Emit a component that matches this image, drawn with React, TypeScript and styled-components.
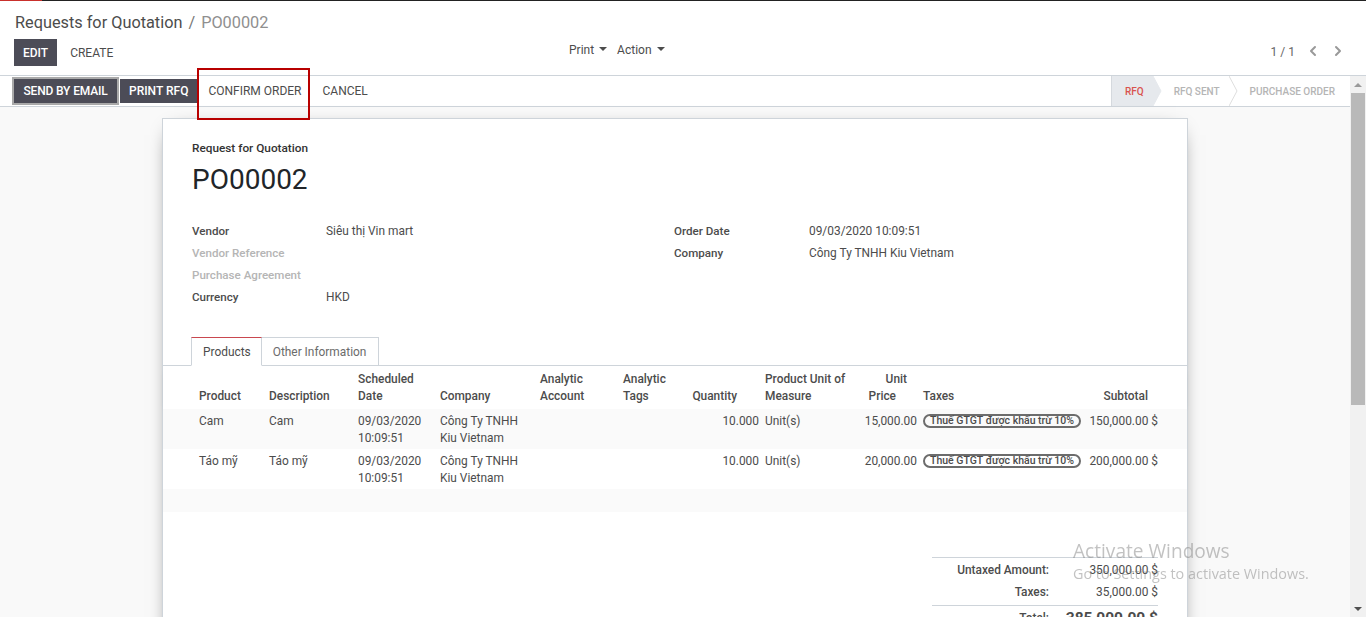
import styled, { createGlobalStyle } from 'styled-components';
import { ChevronLeft, ChevronRight } from 'lucide-react';

const GlobalStyle = createGlobalStyle`
  html, body {
    margin: 0;
    padding: 0;
    height: 100%;
    overflow: hidden;
    background: #fff;
  }
  body {
    font-family: Roboto, "Noto Sans", sans-serif;
    font-size: 11.9px;
    line-height: 17px;
    color: #4c4c4c;
  }
`;

const Page = styled.div`
  display: flex;
  flex-direction: column;
  height: 617px;
  overflow: hidden;
`;

const TopStrip = styled.div`
  flex: none;
  height: 1px;
  padding-bottom: 1px;
  background: linear-gradient(#222, #222) no-repeat 42px 0 / 100% 1px,
    linear-gradient(#c9302c, #c9302c) no-repeat 0 0 / 42px 1px;
`;

const ControlPanel = styled.div`
  flex: none;
  height: 74px;
  box-sizing: border-box;
  padding: 11px 20px 0 15px;
  border-bottom: 1px solid #ced4da;
`;

const Breadcrumb = styled.div`
  font-size: 16.3px;
  line-height: 20px;
  color: #4c4c4c;
`;

const Crumb = styled.span`
  color: #8f8f8f;
  margin-left: 6px;
`;

const Slash = styled.span`
  color: #777;
  margin-left: 6px;
`;

const PanelRow = styled.div`
  display: grid;
  grid-template-columns: 555px auto 1fr;
  align-items: center;
  margin: 6px 0 0 -1px;
  height: 27px;
`;

const ButtonGroup = styled.div`
  display: flex;
`;

const ActionButton = styled.button<{ $primary?: boolean }>`
  border: 0;
  margin: 0;
  height: 27px;
  padding: 0 9px;
  font: ${(p) => (p.$primary ? 500 : 400)} 12px Roboto, sans-serif;
  color: ${(p) => (p.$primary ? '#fff' : '#4c4c4c')};
  background: ${(p) => (p.$primary ? '#4c4c57' : 'transparent')};
  text-transform: uppercase;
`;

const CreateButton = styled(ActionButton)`
  margin-left: 4px;
`;

const Menus = styled.div`
  display: flex;
  gap: 10px;
  margin-top: -5px;
`;

const Menu = styled.span`
  display: flex;
  align-items: center;
  gap: 5px;
  font-size: 12px;
  &::after {
    content: '';
    border-top: 4px solid #4c4c4c;
    border-left: 4px solid transparent;
    border-right: 4px solid transparent;
    margin-bottom: 2px;
  }
`;

const Pager = styled.div`
  display: flex;
  justify-content: flex-end;
  align-items: center;
  gap: 8px;
  color: #666;
  font-size: 12px;
  svg {
    color: #999;
  }
`;

const PagerArrows = styled.span`
  display: flex;
  gap: 9px;
  margin-left: 2px;
  margin-top: -3px;
`;

const Body = styled.div`
  flex: 1;
  display: flex;
  min-height: 0;
`;

const Content = styled.div`
  flex: 1;
  min-width: 0;
  display: flex;
  flex-direction: column;
  background: #f9f9f9;
`;

const StatusBar = styled.div`
  flex: none;
  display: flex;
  justify-content: space-between;
  height: 30px;
  padding-left: 12px;
  background: #fff;
  border-bottom: 1px solid #ced4da;
`;

const FormButtons = styled.div`
  display: flex;
  align-items: center;
  position: relative;
`;

const FocusedButton = styled(ActionButton)`
  height: 24px;
  padding: 0 9px;
  margin-right: 2px;
  box-shadow: 0 0 0 2px #a9a9a9;
  margin-left: 2px;
  margin-top: -1px;
  width: 103px;
  white-space: nowrap;
  letter-spacing: -0.15px;
`;

const PrintButton = styled(ActionButton)`
  height: 24px;
  margin-left: 1px;
  margin-top: -1px;
  padding: 0 9px;
  white-space: nowrap;
`;

const PlainButton = styled(ActionButton)`
  height: 24px;
  margin-top: -1px;
  padding: 0 10px 0 11px;
  white-space: nowrap;
`;

const Highlight = styled.div`
  position: absolute;
  left: 185px;
  top: -8px;
  width: 113px;
  height: 52px;
  box-sizing: border-box;
  border: 2px solid #b80000;
  pointer-events: none;
`;

const Steps = styled.div`
  display: flex;
  align-items: stretch;
`;

const Step = styled.span<{ $active?: boolean }>`
  display: flex;
  align-items: center;
  padding: ${(p) => (p.$active ? '0 9px 0 13px' : '0 9px 0 12px')};
  font-size: 10px;
  font-weight: 500;
  text-transform: uppercase;
  color: ${(p) => (p.$active ? '#d9534f' : '#b5b5b5')};
  background: ${(p) => (p.$active ? '#e6e9ed' : 'transparent')};
  border-left: ${(p) => (p.$active ? '1px solid #d5d9de' : '0')};
`;

const LastStep = styled(Step)`
  padding-right: 15px;
`;

const Sheet = styled.div`
  flex: none;
  width: 1026px;
  box-sizing: border-box;
  height: 600px;
  margin: 11px 0 0 162px;
  padding-top: 21px;
  background: #fff;
  border: 1px solid #ced4da;
  box-shadow: 0 5px 20px -12px #000;
`;

const SheetHead = styled.div`
  padding-left: 29px;
`;

const DocType = styled.div`
  font-size: 11.8px;
  font-weight: 500;
  color: #333;
`;

const DocName = styled.h1`
  margin: 6px 0 0;
  font-size: 28px;
  line-height: 34px;
  font-weight: 400;
  color: #212529;
`;

const FieldColumns = styled.div`
  display: grid;
  grid-template-columns: 482px 1fr;
  padding: 24px 0 0 29px;
  height: 116px;
`;

const FieldGroup = styled.div`
  display: flex;
  flex-direction: column;
`;

const Field = styled.div`
  display: grid;
  grid-template-columns: 134px 1fr;
  height: 22px;
  line-height: 20px;
`;

const WideField = styled(Field)`
  grid-template-columns: 135px 1fr;
`;

const Label = styled.span<{ $muted?: boolean }>`
  font-size: 11.6px;
  font-weight: 500;
  color: ${(p) => (p.$muted ? '#b5b5b5' : '#4c4c4c')};
`;

const Tabs = styled.div`
  display: flex;
  height: 28px;
  padding-left: 28px;
  border-bottom: 1px solid #ced4da;
`;

const Tab = styled.span<{ $active?: boolean }>`
  display: flex;
  align-items: center;
  height: 29px;
  box-sizing: border-box;
  padding: 2px ${(p) => (p.$active ? 10 : 12)}px 0 11px;
  color: ${(p) => (p.$active ? '#4c4c4c' : '#6b6b6b')};
  background: #fff;
  border: 1px solid #ced4da;
  border-left-width: ${(p) => (p.$active ? '1px' : '0')};
  border-bottom-color: ${(p) => (p.$active ? '#fff' : '#ced4da')};
  border-top-color: ${(p) => (p.$active ? '#c9474f' : '#ced4da')};
`;

const LinesTable = styled.table`
  width: 1024px;
  table-layout: fixed;
  border-collapse: collapse;
`;

const Col = styled.col<{ $w: number }>`
  width: ${(p) => p.$w}px;
`;

const HeadRow = styled.tr`
  box-shadow: 0 3px 6px -3px rgba(0, 0, 0, 0.12);
`;

const Th = styled.th<{ $right?: boolean }>`
  height: 43px;
  box-sizing: border-box;
  padding: 4px ${(p) => (p.$right ? 25 : 3)}px 4px 3px;
  vertical-align: bottom;
  text-align: ${(p) => (p.$right ? 'right' : 'left')};
  font-weight: 500;
  color: #4c4c4c;
  &:first-child {
    padding-left: 36px;
  }
`;

const PriceHead = styled(Th)`
  padding-right: 13px;
`;

const SubtotalHead = styled(Th)`
  padding-right: 13px;
`;

const PriceWord = styled.span`
  display: block;
  margin-right: 11px;
`;

const Row = styled.tr<{ $odd?: boolean }>`
  background: ${(p) => (p.$odd ? '#fafafa' : '#fff')};
`;

const Td = styled.td<{ $right?: boolean }>`
  padding: 4px 3px 2px;
  height: 40px;
  box-sizing: border-box;
  vertical-align: top;
  text-align: ${(p) => (p.$right ? 'right' : 'left')};
  &:first-child {
    padding-left: 36px;
  }
`;

const TaxBadge = styled.span`
  display: block;
  width: 158px;
  height: 14px;
  box-sizing: border-box;
  margin-top: 1px;
  border: 2px solid #6c6c6c;
  border-radius: 8px;
  font-size: 10.5px;
  font-weight: 500;
  line-height: 10px;
  text-align: center;
  white-space: nowrap;
  color: #4c4c4c;
`;

const SpacerCell = styled.td`
  height: 23px;
  padding: 0;
`;

const Totals = styled.div`
  width: 226px;
  margin: 45px 0 0 769px;
  border-top: 1px solid #ced4da;
`;

const TotalLine = styled.div`
  display: grid;
  grid-template-columns: 117px 1fr;
  height: 22px;
  line-height: 22px;
  text-align: right;
  &:first-child {
    margin-top: 1px;
  }
`;

const TotalLabel = styled.span`
  font-weight: 500;
`;

const GrandLine = styled(TotalLine)`
  margin-top: 2px;
  padding-top: 1px;
  border-top: 1px solid #ced4da;
`;

const GrandValue = styled.span`
  font-size: 15.5px;
  font-weight: 700;
`;

const ScrollBar = styled.div`
  flex: none;
  width: 16px;
  display: flex;
  flex-direction: column;
  align-items: center;
  background: #f1f1f1;
`;

const ScrollUp = styled.span`
  margin: 7px 0 6px;
  border-bottom: 4px solid #9a9a9a;
  border-left: 4px solid transparent;
  border-right: 4px solid transparent;
`;

const ScrollThumb = styled.span`
  width: 14px;
  height: 312px;
  background: #b9b9b9;
`;

const ScrollDown = styled.span`
  margin-top: auto;
  margin-bottom: 6px;
  border-top: 4px solid #505050;
  border-left: 4px solid transparent;
  border-right: 4px solid transparent;
`;

const Watermark = styled.div`
  position: fixed;
  left: 1073px;
  top: 539px;
  color: rgba(120, 120, 120, 0.45);
  font-family: "Open Sans", sans-serif;
  pointer-events: none;
`;

const WatermarkTitle = styled.div`
  font-size: 19.1px;
  line-height: 24px;
`;

const WatermarkText = styled.div`
  font-size: 14.4px;
  line-height: 21px;
`;

function StepArrow({ filled }: { filled?: boolean }) {
  return (
    <svg width="9" height="30" viewBox="0 0 9 30">
      <path
        d="M0 0 L8 15 L0 30"
        fill={filled ? '#e6e9ed' : 'none'}
        stroke={filled ? '#e6e9ed' : '#dedede'}
      />
    </svg>
  );
}

const colWidths = [103, 89, 82, 100, 83, 69, 73, 93, 65, 165, 76, 26];

const lines = [
  { name: 'Cam', price: '15,000.00', subtotal: '150,000.00 $' },
  { name: 'Táo mỹ', price: '20,000.00', subtotal: '200,000.00 $' },
];

export default function App() {
  return (
    <Page>
      <GlobalStyle />
      <TopStrip />
      <ControlPanel>
        <Breadcrumb>
          Requests for Quotation<Slash>/</Slash>
          <Crumb>PO00002</Crumb>
        </Breadcrumb>
        <PanelRow>
          <ButtonGroup>
            <ActionButton $primary>Edit</ActionButton>
            <CreateButton>Create</CreateButton>
          </ButtonGroup>
          <Menus>
            <Menu>Print</Menu>
            <Menu>Action</Menu>
          </Menus>
          <Pager>
            <span>1 / 1</span>
            <PagerArrows>
              <ChevronLeft size={16} strokeWidth={3} />
              <ChevronRight size={16} strokeWidth={3} />
            </PagerArrows>
          </Pager>
        </PanelRow>
      </ControlPanel>
      <Body>
        <Content>
          <StatusBar>
            <FormButtons>
              <FocusedButton $primary>Send by email</FocusedButton>
              <PrintButton $primary>Print RFQ</PrintButton>
              <PlainButton>Confirm Order</PlainButton>
              <PlainButton>Cancel</PlainButton>
              <Highlight />
            </FormButtons>
            <Steps>
              <Step $active>RFQ</Step>
              <StepArrow filled />
              <Step>RFQ Sent</Step>
              <StepArrow />
              <LastStep>Purchase Order</LastStep>
            </Steps>
          </StatusBar>
          <Sheet>
            <SheetHead>
              <DocType>Request for Quotation</DocType>
              <DocName>PO00002</DocName>
            </SheetHead>
            <FieldColumns>
              <FieldGroup>
                <Field>
                  <Label>Vendor</Label>
                  <span>Siêu thị Vin mart</span>
                </Field>
                <Field>
                  <Label $muted>Vendor Reference</Label>
                </Field>
                <Field>
                  <Label $muted>Purchase Agreement</Label>
                </Field>
                <Field>
                  <Label>Currency</Label>
                  <span>HKD</span>
                </Field>
              </FieldGroup>
              <FieldGroup>
                <WideField>
                  <Label>Order Date</Label>
                  <span>09/03/2020 10:09:51</span>
                </WideField>
                <WideField>
                  <Label>Company</Label>
                  <span>Công Ty TNHH Kiu Vietnam</span>
                </WideField>
              </FieldGroup>
            </FieldColumns>
            <Tabs>
              <Tab $active>Products</Tab>
              <Tab>Other Information</Tab>
            </Tabs>
            <LinesTable>
              <colgroup>
                {colWidths.map((w, i) => (
                  <Col key={i} $w={w} />
                ))}
              </colgroup>
              <thead>
                <HeadRow>
                  <Th>Product</Th>
                  <Th>Description</Th>
                  <Th>Scheduled Date</Th>
                  <Th>Company</Th>
                  <Th>Analytic Account</Th>
                  <Th>Analytic Tags</Th>
                  <Th $right>Quantity</Th>
                  <Th>Product Unit of Measure</Th>
                  <PriceHead $right>
                    Unit
                    <PriceWord>Price</PriceWord>
                  </PriceHead>
                  <Th>Taxes</Th>
                  <SubtotalHead $right>Subtotal</SubtotalHead>
                  <Th />
                </HeadRow>
              </thead>
              <tbody>
                {lines.map((line, i) => (
                  <Row key={line.name} $odd={i % 2 === 0}>
                    <Td>{line.name}</Td>
                    <Td>{line.name}</Td>
                    <Td>09/03/2020 10:09:51</Td>
                    <Td>Công Ty TNHH Kiu Vietnam</Td>
                    <Td />
                    <Td />
                    <Td $right>10.000</Td>
                    <Td>Unit(s)</Td>
                    <Td $right>{line.price}</Td>
                    <Td>
                      <TaxBadge>Thuế GTGT được khấu trừ 10%</TaxBadge>
                    </Td>
                    <Td $right>{line.subtotal}</Td>
                    <Td />
                  </Row>
                ))}
                <Row $odd>
                  <SpacerCell colSpan={12} />
                </Row>
              </tbody>
            </LinesTable>
            <Totals>
              <TotalLine>
                <TotalLabel>Untaxed Amount:</TotalLabel>
                <span>350,000.00 $</span>
              </TotalLine>
              <TotalLine>
                <TotalLabel>Taxes:</TotalLabel>
                <span>35,000.00 $</span>
              </TotalLine>
              <GrandLine>
                <TotalLabel>Total:</TotalLabel>
                <GrandValue>385,000.00 $</GrandValue>
              </GrandLine>
            </Totals>
          </Sheet>
        </Content>
        <ScrollBar>
          <ScrollUp />
          <ScrollThumb />
          <ScrollDown />
        </ScrollBar>
      </Body>
      <Watermark>
        <WatermarkTitle>Activate Windows</WatermarkTitle>
        <WatermarkText>Go to Settings to activate Windows.</WatermarkText>
      </Watermark>
    </Page>
  );
}
